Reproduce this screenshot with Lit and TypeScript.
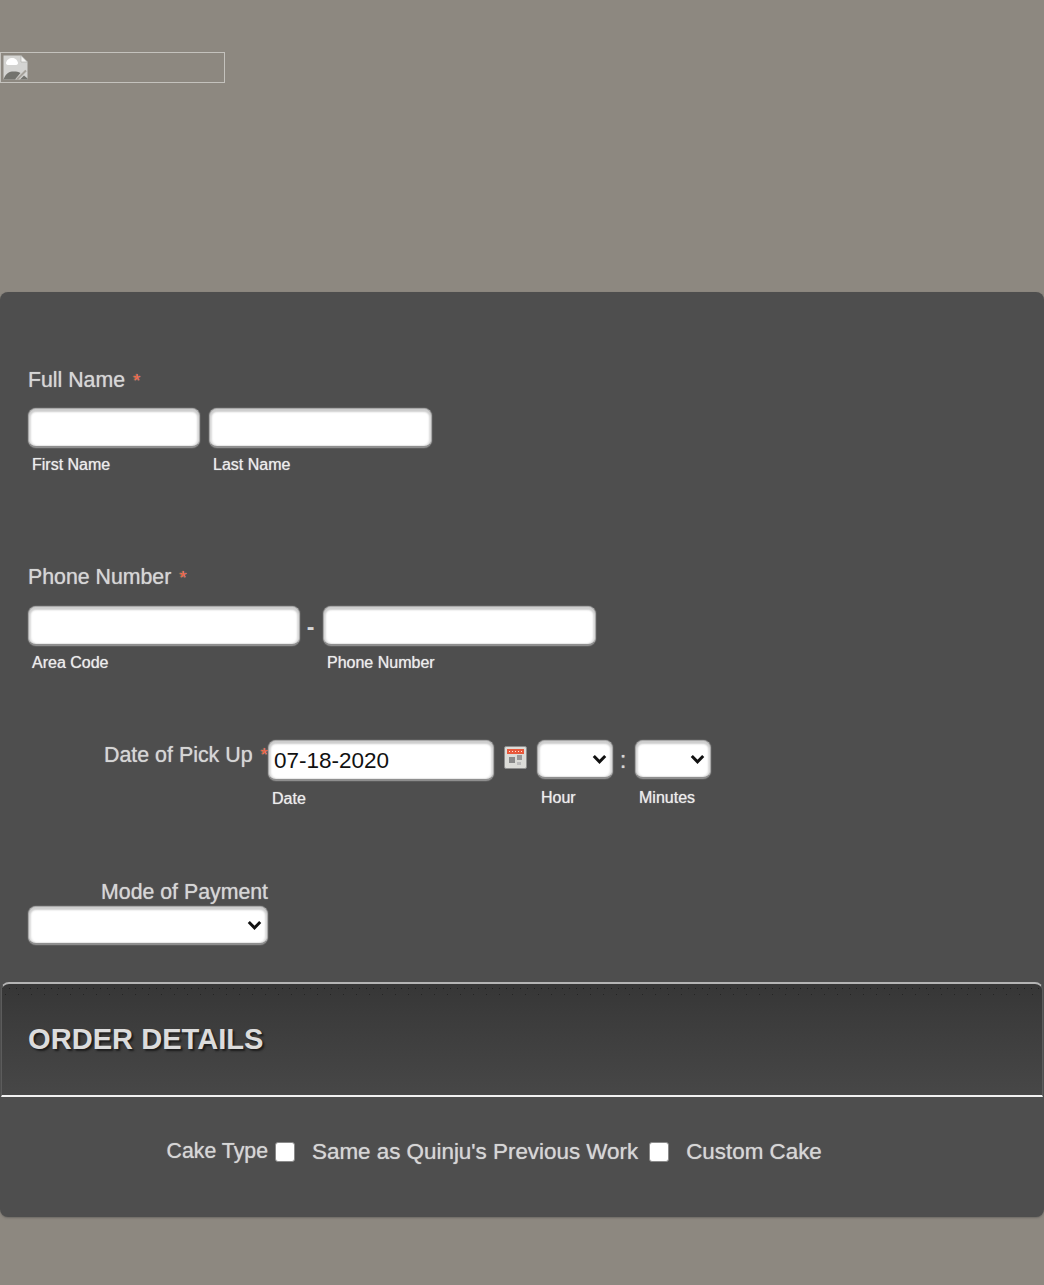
import { LitElement, html, css } from "lit";
import { customElement } from "lit/decorators.js";

@customElement("app-root")
export class AppRoot extends LitElement {
  static styles = css`
    :host {
      display: block;
      min-height: 1285px;
      background: #8d8880;
      font-family: "Liberation Sans", Arial, sans-serif;
      color: #d6d6d6;
      overflow: hidden;
    }
    .logo {
      display: block;
      box-sizing: border-box;
      width: 225px;
      height: 31px;
      margin-top: 52px;
      border: 1px solid #c4c2bd;
      padding: 2px 0 0 2px;
    }
    .logo svg { display: block; }
    .card {
      margin-top: 209px;
      height: 925px;
      box-sizing: border-box;
      background: #4e4e4e;
      border-radius: 8px;
      box-shadow: 0 1px 2px rgba(60, 60, 60, 0.4);
      padding-top: 75px;
      display: flex;
      flex-direction: column;
    }
    .field { padding-left: 28px; }
    .phone { margin-top: 90px; }
    .pickup { margin-top: 68px; }
    .payment { margin-top: 71px; }
    .label {
      font-size: 21.3px;
      line-height: 26px;
      text-shadow: 0 0 1px rgba(235, 235, 235, 0.7);
    }
    .req { color: #f0603c; margin-left: 2px; font-size: 19px; }
    .inputs { display: flex; align-items: flex-start; margin-top: 14px; }
    .phone .inputs { margin-top: 15px; }
    .sub {
      display: block;
      font-size: 16px;
      line-height: 18px;
      margin: 8px 0 0 4px;
      color: #ececec;
      text-shadow: 0 0 1px rgba(255, 255, 255, 0.7);
    }
    .col { display: flex; flex-direction: column; }
    .box {
      box-sizing: border-box;
      height: 40px;
      background: #fff;
      border: 1px solid #a8a8a8;
      border-bottom: 2px solid #8e8e8e;
      border-radius: 8px;
      box-shadow: inset 0 3px 2px #cdcdcd, inset 2px 0 2px #dcdcdc, inset -2px 0 2px #dcdcdc,
        inset 0 -1px 0 #f4f4f4, 0 0 0 1px rgba(120, 120, 120, 0.35);
      font-family: "Liberation Sans", Arial, sans-serif;
      color: #111;
      outline: none;
      margin: 0;
    }
    input.box { padding: 1px 5px 0; font-size: 22.5px; }
    .first { width: 172px; }
    .last { width: 223px; }
    .gap-last { margin-left: 9px; }
    .area { width: 272px; }
    .number { width: 273px; }
    .dash {
      width: 23px;
      margin-left: -1px;
      margin-right: 1px;
      text-align: center;
      font-size: 23px;
      font-weight: 700;
      line-height: 42px;
    }
    .pick-row { display: flex; align-items: flex-start; }
    .pick-label {
      width: 240px;
      box-sizing: border-box;
      display: flex;
      justify-content: flex-end;
      padding-top: 2px;
      flex: none;
      font-size: 21.4px;
    }
    .pick-label .req { margin-left: 8px; }
    .date { width: 226px; height: 41px; }
    .cal { margin: 6px 10px 0; flex: none; display: block; }
    .hour { width: 76px; height: 39px; }
    .colon {
      width: 22px;
      margin-left: -1px;
      margin-right: 1px;
      text-align: center;
      font-size: 24px;
      line-height: 40px;
      text-shadow: 0 0 1px rgba(235, 235, 235, 0.7);
    }
    .minutes { width: 76px; height: 39px; }
    .pick-row .sub { margin-top: 9px; }
    .pick-row .sub.tight { margin-top: 10px; }
    .pay-label { width: 240px; text-align: right; }
    .pay-select { width: 240px; height: 39px; display: block; }
    .sel { position: relative; display: block; }
    .pay-wrap { margin-top: 1px; width: 240px; }
    select.box { appearance: none; padding: 0 0 0 2px; font-size: 16px; }
    .chev { position: absolute; right: 6px; top: 14px; pointer-events: none; }
    .section {
      margin: 37px 1px 0;
      box-sizing: border-box;
      height: 115px;
      border-top: 2px solid #b4b4b4;
      border-bottom: 2px solid #f2f2f2;
      border-left: 1px solid #5c5c5c;
      border-right: 1px solid #5c5c5c;
      border-radius: 8px 8px 0 0;
      background:
        radial-gradient(circle at 1.5px 1.5px, #1f1f1f 0.7px, transparent 1px) 6px 3px / 7px 5px repeat-x,
        radial-gradient(circle at 1.5px 1.5px, #242424 0.7px, transparent 1px) 2px 9px / 13px 5px repeat-x,
        linear-gradient(#363636 0%, #3b3b3b 25%, #474747 100%);
      padding: 38px 0 0 26px;
    }
    h2 {
      margin: 0;
      font-size: 29.1px;
      line-height: 34px;
      font-weight: 700;
      color: #dcdcdc;
      text-shadow: 2px 2px 2px #1c1c1c;
    }
    .cake {
      display: flex;
      align-items: center;
      margin-top: 41px;
      height: 28px;
      font-size: 22.4px;
    }
    .cake-label { width: 268px; text-align: right; flex: none; position: relative; top: -1px; font-size: 21.3px; }
    .check {
      appearance: none;
      box-sizing: border-box;
      width: 20px;
      height: 20px;
      margin: 0;
      background: #fff;
      border: 1px solid #8a8a8a;
      border-radius: 3px;
      flex: none;
    }
    .c1 { margin-left: 7px; }
    .o1 { margin-left: 17px; }
    .c2 { margin-left: 11px; }
    .o2 { margin-left: 17px; }
  `;

  private chevron() {
    return html`<svg class="chev" width="15" height="11" viewBox="0 0 15 11">
      <path d="M1.8 2L7.5 7.8L13.2 2" fill="none" stroke="#111" stroke-width="3" />
    </svg>`;
  }

  render() {
    return html`
      <div class="logo">
        <svg width="25" height="25" viewBox="0 0 25 25">
          <path d="M0.5 0.5H18L24.5 7V24.5H0.5Z" fill="#d4d4d2" />
          <path d="M18 0.5V7H24.5Z" fill="#f4f4f2" stroke="#a8a8a4" stroke-width="0.6" />
          <path d="M3 8C3.5 5 6 3 9.5 3C12.5 3 14.5 5.5 15 8C15 9.5 14 10 12 10H6C4 10 3 9.5 3 8Z" fill="#ffffff" />
          <path d="M0.5 24.5C2 20 5 17 9 16.5C12 16.2 15 16.5 17.5 18L12 24.5Z" fill="#73736e" />
          <path d="M17 24.5L21 20.5L24.5 23.5V24.5Z" fill="#73736e" />
          <path d="M14 24.5L23 15.5" stroke="#a5a19a" stroke-width="2" />
        </svg>
      </div>
      <div class="card">
        <div class="field">
          <div class="label">Full Name <span class="req">*</span></div>
          <div class="inputs">
            <div class="col">
              <input class="box first" type="text" />
              <span class="sub">First Name</span>
            </div>
            <div class="col gap-last">
              <input class="box last" type="text" />
              <span class="sub">Last Name</span>
            </div>
          </div>
        </div>

        <div class="field phone">
          <div class="label">Phone Number <span class="req">*</span></div>
          <div class="inputs">
            <div class="col">
              <input class="box area" type="text" />
              <span class="sub">Area Code</span>
            </div>
            <div class="dash">-</div>
            <div class="col">
              <input class="box number" type="text" />
              <span class="sub">Phone Number</span>
            </div>
          </div>
        </div>

        <div class="field pickup">
          <div class="pick-row">
            <div class="pick-label label">Date of Pick Up<span class="req">*</span></div>
            <div class="col">
              <input class="box date" type="text" value="07-18-2020" />
              <span class="sub">Date</span>
            </div>
            <svg class="cal" width="23" height="23" viewBox="0 0 23 23">
              <rect x="0.5" y="0.5" width="22" height="22" rx="1.5" fill="#dcdcd8" stroke="#8e8e8e" />
              <rect x="3" y="3" width="17" height="5" fill="#e8593c" />
              <path d="M5 5.5h1M8 5.5h1M11 5.5h1M14 5.5h1M17 5.5h1" stroke="#ffe3d8" />
              <rect x="5" y="11" width="6" height="6" fill="#8a8a8a" />
              <rect x="13" y="9" width="5" height="5" fill="#989898" />
              <rect x="13" y="16" width="4" height="3" fill="#bcbcbc" />
            </svg>
            <div class="col">
              <div class="sel">
                <select class="box hour"><option></option></select>
                ${this.chevron()}
              </div>
              <span class="sub tight">Hour</span>
            </div>
            <div class="colon">:</div>
            <div class="col">
              <div class="sel">
                <select class="box minutes"><option></option></select>
                ${this.chevron()}
              </div>
              <span class="sub tight">Minutes</span>
            </div>
          </div>
        </div>

        <div class="field payment">
          <div class="label pay-label">Mode of Payment</div>
          <div class="sel pay-wrap">
            <select class="box pay-select"><option></option></select>
            ${this.chevron()}
          </div>
        </div>

        <div class="section"><h2>ORDER DETAILS</h2></div>

        <div class="cake label">
          <span class="cake-label">Cake Type</span>
          <input class="check c1" type="checkbox" />
          <span class="o1">Same as Quinju's Previous Work</span>
          <input class="check c2" type="checkbox" />
          <span class="o2">Custom Cake</span>
        </div>
      </div>
    `;
  }
}
